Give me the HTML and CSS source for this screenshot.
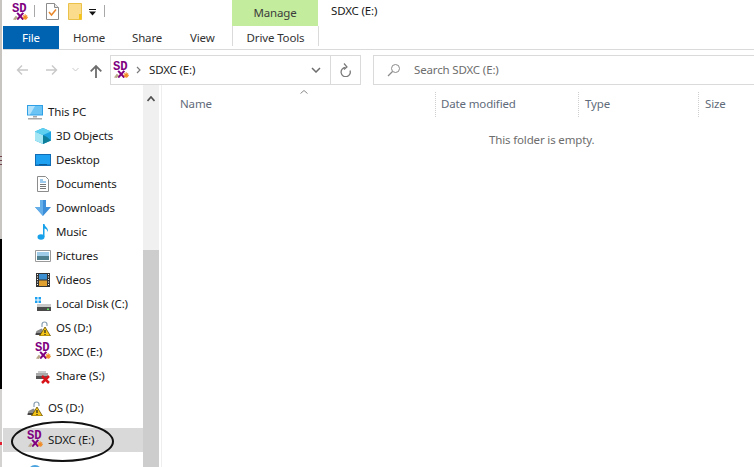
FILE: index.html
```html
<!DOCTYPE html>
<html lang="en">
<head>
<meta charset="utf-8">
<title>SDXC (E:)</title>
<link rel="stylesheet" href="styles.css">
</head>
<body>
<svg class="defs" width="0" height="0" aria-hidden="true">
  <defs>
    <symbol id="i-sd" viewBox="0 0 17 18">
      <text x="0" y="9" class="sd-text">SD</text>
      <path d="M5.500 10.500l6.500 7M12 10.500l-6.500 7" stroke="#800080" stroke-width="2.200" fill="none"/>
      <path d="M1 17.500l3-4 2.500 2-2.500 2.500z" fill="#b9a98a"/>
      <path d="M14 12v6M11 15h6M12 13l4 4M16 13l-4 4" stroke="#f08a24" stroke-width="1.100" fill="none"/>
    </symbol>
    <symbol id="i-os" viewBox="0 0 16 16">
      <path d="M7 7V4.500a2.500 2.500 0 0 1 5 0V6" fill="none" stroke="#8aa0b4" stroke-width="1.200"/>
      <path d="M0 15l1.500-4 5-2.500 1 1V15z" fill="#8b8b8b"/>
      <path d="M1 15v-2h5v2z" fill="#444"/>
      <path d="M10 7l5.500 9h-11z" fill="#f5c518" stroke="#6b5200" stroke-width=".8"/>
      <path d="M10 10v3M10 14v1" stroke="#222" stroke-width="1.200"/>
    </symbol>
  </defs>
</svg>
<div class="app">
  <div class="edge">
    <div class="edge-top">
      <span class="edge-mark"></span><span class="edge-mark"></span><span class="edge-mark"></span>
    </div>
    <div class="edge-black"></div>
    <div class="edge-low"><span class="edge-red"></span></div>
  </div>
  <div class="window">
    <header class="title-row">
      <svg class="ic-qat-sd"><use href="#i-sd"/></svg>
      <span class="qat-sep"></span>
      <svg class="ic-prop" viewBox="0 0 13 17">
        <path d="M.5.500h8l4 4v12H.5z" fill="#fff" stroke="#8c8c8c"/>
        <path d="M8.500.500v4h4" fill="#e8e8e8" stroke="#8c8c8c"/>
        <path d="M3 9l2.500 3L10 6.500" fill="none" stroke="#e8862a" stroke-width="1.500"/>
      </svg>
      <svg class="ic-folder" viewBox="0 0 14 17">
        <path d="M.5.500h13v16H.5z" fill="#fbdc8c" stroke="#eac24a"/>
        <path d="M11 11h2.500v5.500H11z" fill="#f5c518"/>
      </svg>
      <svg class="ic-drop" viewBox="0 0 7 7">
        <path d="M0 .500h7" stroke="#111" stroke-width="1"/>
        <path d="M0 2.500h7L3.500 6.500z" fill="#111"/>
      </svg>
      <span class="qat-sep qat-sep-last"></span>
      <div class="manage">Manage</div>
      <div class="window-title">SDXC (E:)</div>
    </header>
    <nav class="tab-row">
      <div class="tab-file">File</div>
      <div class="tab tab-home">Home</div>
      <div class="tab tab-share">Share</div>
      <div class="tab tab-view">View</div>
      <div class="tab-drive">Drive Tools</div>
    </nav>
    <div class="nav-row">
      <svg class="nav-arrow" viewBox="0 0 12 12"><path d="M12 6H1.500M6 1.500L1.500 6 6 10.500" fill="none" stroke="#c8c8c8" stroke-width="1.400"/></svg>
      <svg class="nav-arrow nav-forward" viewBox="0 0 12 12"><path d="M0 6h10.500M6 1.500L10.500 6 6 10.500" fill="none" stroke="#c8c8c8" stroke-width="1.400"/></svg>
      <svg class="nav-recent" viewBox="0 0 7 5"><path d="M.5 1L3.500 4l3-3" fill="none" stroke="#c8c8c8" stroke-width="1"/></svg>
      <svg class="nav-up" viewBox="0 0 12 14"><path d="M6 14V2M.7 7.300L6 2l5.300 5.300" fill="none" stroke="#6d6d6d" stroke-width="1.800"/></svg>
      <div class="address">
        <svg class="ic-addr-sd"><use href="#i-sd"/></svg>
        <svg class="crumb" viewBox="0 0 5 8"><path d="M1 1l3 3-3 3" fill="none" stroke="#7a7a7a" stroke-width="1.200"/></svg>
        <span class="address-text">SDXC (E:)</span>
        <svg class="addr-drop" viewBox="0 0 10 6"><path d="M1 1l4 4 4-4" fill="none" stroke="#6d6d6d" stroke-width="1.500"/></svg>
        <span class="refresh">
          <svg viewBox="0 0 12 14" width="12" height="14"><path d="M5.500 2.500A4.600 4.600 0 1 0 10 5.500" fill="none" stroke="#7a7a7a" stroke-width="1.300" transform="translate(0 2)"/><path d="M4 .5l3 3.500-3 2.500" fill="none" stroke="#7a7a7a" stroke-width="1.200"/></svg>
        </span>
      </div>
      <div class="search">
        <svg class="ic-search" viewBox="0 0 14 14"><circle cx="8.500" cy="5.500" r="4" fill="none" stroke="#8a8a8a" stroke-width="1"/><path d="M5.500 8.500L1 13" stroke="#8a8a8a" stroke-width="1.200"/></svg>
        <span>Search SDXC (E:)</span>
      </div>
    </div>
    <div class="body-row">
      <aside class="tree">
        <div class="row">
          <svg class="ic" viewBox="0 0 16 16"><path d="M0 1h16v10.500H0z" fill="#2f9fe6"/><path d="M1 2h14v8.500H1z" fill="#6cc4f5"/><path d="M1 2h7L3 10.500H1z" fill="#b4e2fb"/><path d="M6 12h4v1.500H6zM1 14h14v1.500H1z" fill="#a8a8a8"/></svg>
          <span>This PC</span>
        </div>
        <div class="row row-child">
          <svg class="ic" viewBox="0 0 16 16"><path d="M8 0l8 3.500v9L8 16l-8-3.500v-9z" fill="#1fa3e0"/><path d="M0 3.500L8 7v9l-8-3.500z" fill="#a4e6f4"/><path d="M8 7v9l8-3.500L12 9z" fill="#0d7f9a"/><path d="M8 0l8 3.500L8 7 0 3.500z" fill="#5fd0f0"/></svg>
          <span>3D Objects</span>
        </div>
        <div class="row row-child">
          <svg class="ic" viewBox="0 0 16 16"><path d="M0 2h16v12H0z" fill="#0f6cb5"/><path d="M1 3h14v9.500H1z" fill="#1ea1f1"/><path d="M4 12h8v1H4z" fill="#0c5a96"/></svg>
          <span>Desktop</span>
        </div>
        <div class="row row-child">
          <svg class="ic" viewBox="0 0 16 16"><path d="M2.500.500h8l3 3v12h-11z" fill="#fff" stroke="#8c8c8c"/><path d="M5 4h3M5 6h6" stroke="#3a96dd"/><path d="M5 8.500h6M5 10.500h6M5 12.500h6" stroke="#777"/></svg>
          <span>Documents</span>
        </div>
        <div class="row row-child">
          <svg class="ic" viewBox="0 0 16 16"><path d="M5 0h6v7h5l-8 9-8-9h5z" fill="#3d8fd9"/><path d="M5 0h3v16L0 7h5z" fill="#64aeea"/></svg>
          <span>Downloads</span>
        </div>
        <div class="row row-child">
          <svg class="ic" viewBox="0 0 16 16"><ellipse cx="6" cy="13" rx="3.500" ry="2.800" fill="#17a1ea"/><path d="M8 13V0h1.500c.3 3 4 3.500 3.500 8-1-2.500-2.500-3.500-3.500-3.500V13z" fill="#17a1ea"/></svg>
          <span>Music</span>
        </div>
        <div class="row row-child">
          <svg class="ic" viewBox="0 0 16 16"><path d="M.5 2.500h15v11H.5z" fill="#fff" stroke="#9a9a9a"/><path d="M2 4h12v4H2z" fill="#9ecbe8"/><path d="M2 8h12v4H2z" fill="#4d7f8f"/></svg>
          <span>Pictures</span>
        </div>
        <div class="row row-child">
          <svg class="ic" viewBox="0 0 16 16"><path d="M1 1h14v14H1z" fill="#333"/><path d="M4 2h8v5.500H4z" fill="#3c8fd0"/><path d="M4 8.500h8V14H4z" fill="#e0a030"/><path d="M2 2.500h1M2 5h1M2 7.500h1M2 10h1M2 12.500h1M13 2.500h1M13 5h1M13 7.500h1M13 10h1M13 12.500h1" stroke="#fff" stroke-width="1"/></svg>
          <span>Videos</span>
        </div>
        <div class="row row-child">
          <svg class="ic" viewBox="0 0 16 16"><path d="M0 1h2.500v2.500H0zM3.500 1H6v2.500H3.500zM0 4.500h2.500V7H0zM3.500 4.500H6V7H3.500z" fill="#1ea1f1"/><path d="M2 8h14v7H2z" fill="#c9c9c9"/><path d="M2 11h14v4H2z" fill="#4a4a4a"/><path d="M12 12.500h2v1.500h-2z" fill="#5fe05f"/></svg>
          <span>Local Disk (C:)</span>
        </div>
        <div class="row row-child">
          <svg class="ic"><use href="#i-os"/></svg>
          <span>OS (D:)</span>
        </div>
        <div class="row row-child">
          <svg class="ic ic-sd"><use href="#i-sd"/></svg>
          <span>SDXC (E:)</span>
        </div>
        <div class="row row-child">
          <svg class="ic" viewBox="0 0 16 16"><path d="M1 5h12v6H1z" fill="#a9a9a9"/><path d="M1 8h12v3H1z" fill="#555"/><path d="M3 3h8v2H3z" fill="#ccc"/><path d="M7 8l7 7M14 8l-7 7" stroke="#d8141a" stroke-width="2.500"/></svg>
          <span>Share (S:)</span>
        </div>
        <div class="row row-gap">
          <svg class="ic"><use href="#i-os"/></svg>
          <span>OS (D:)</span>
        </div>
        <div class="row row-gap row-selected">
          <svg class="ic ic-sd"><use href="#i-sd"/></svg>
          <span>SDXC (E:)</span>
        </div>
        <div class="row row-gap">
          <svg class="ic ic-net" viewBox="0 0 16 16"><circle cx="8" cy="8" r="7" fill="#4aa3df"/><path d="M2 8h12" stroke="#d8eefb"/></svg>
        </div>
      </aside>
      <div class="scrollbar">
        <div class="scroll-track">
          <svg class="scroll-up" viewBox="0 0 8 6"><path d="M.500 5L4 1l3.500 4" fill="none" stroke="#505050" stroke-width="1.700"/></svg>
        </div>
        <div class="scroll-thumb"></div>
      </div>
      <main class="files">
        <div class="col-head">
          <div class="col col-name">Name<svg class="sort" viewBox="0 0 8 4"><path d="M.5 3.500L4 .5l3.500 3" fill="none" stroke="#8a8a8a"/></svg></div>
          <div class="col col-date">Date modified</div>
          <div class="col col-type">Type</div>
          <div class="col col-size">Size</div>
        </div>
        <p class="empty">This folder is empty.</p>
      </main>
    </div>
  </div>
  <div class="ellipse"></div>
</div>
</body>
</html>
```
FILE: styles.css
```css
* { box-sizing: border-box; }
html, body { margin: 0; padding: 0; background: #fff; }
body { width: 754px; height: 467px; overflow: hidden; font-family: "Noto Sans", "Open Sans", sans-serif; font-size: 11.5px; letter-spacing: -0.15px; color: #1a1a1a; }
.defs { display: block; height: 0; }
.sd-text { font-family: "Liberation Mono", monospace; font-weight: 700; font-size: 13px; letter-spacing: 0; fill: #800080; }
.app { position: relative; width: 754px; height: 467px; display: flex; overflow: hidden; }
.edge { width: 3px; flex: none; display: flex; flex-direction: column; padding-right: 1px; }
.edge-top { height: 239px; background: #c8c4c0; display: flex; flex-direction: column; gap: 3px; padding-top: 156px; }
.edge-mark { height: 1px; background: #70404c; }
.edge-black { height: 150px; background: #000; }
.edge-low { flex: 1; background: #d4d2d0; padding-top: 53px; }
.edge-red { display: block; height: 3px; background: #e02030; }
.window { width: 751px; flex: none; display: flex; flex-direction: column; }

.title-row { height: 26px; display: flex; align-items: flex-start; }
.ic-qat-sd { width: 16px; height: 17px; margin: 3px 0 0 9px; flex: none; }
.qat-sep { width: 1px; height: 12px; margin: 5px 0 0 6px; background: #a8a8a8; flex: none; }
.ic-prop { width: 13px; height: 17px; margin: 3px 0 0 11px; flex: none; }
.ic-folder { width: 14px; height: 17px; margin: 3px 0 0 9px; flex: none; }
.ic-drop { width: 7px; height: 7px; margin: 9px 0 0 7px; flex: none; }
.qat-sep-last { margin-left: 8px; }
.manage { width: 86px; height: 26px; margin-left: 127px; background: #c3ec9c; text-align: center; line-height: 26px; color: #3c3c3c; flex: none; }
.window-title { margin-left: 13px; line-height: 22px; color: #1a1a1a; }

.tab-row { height: 24px; display: flex; border-bottom: 1px solid #dadada; align-items: flex-start; }
.tab-file { width: 56px; height: 23px; background: #0063b1; color: #fff; text-align: center; line-height: 23px; flex: none; }
.tab { line-height: 23px; color: #333; flex: none; }
.tab-home { width: 59px; margin-left: 14px; }
.tab-share { width: 58px; }
.tab-view { width: 42px; }
.tab-drive { width: 87px; height: 20px; border: solid #dadada; border-width: 0 1px; text-align: center; line-height: 23px; color: #333; flex: none; }

.nav-row { height: 35px; display: flex; align-items: flex-start; }
.nav-arrow { width: 12px; height: 12px; margin: 14px 0 0 13px; flex: none; }
.nav-forward { margin-left: 18px; }
.nav-recent { width: 7px; height: 5px; margin: 17px 0 0 14px; flex: none; }
.nav-up { width: 12px; height: 14px; margin: 14px 0 0 11px; flex: none; }
.address { width: 251px; height: 30px; margin: 5px 0 0 8px; border: 1px solid #dadada; display: flex; align-items: center; flex: none; }
.ic-addr-sd { width: 16px; height: 17px; margin: -2px 0 0 2px; flex: none; }
.crumb { width: 5px; height: 8px; margin-left: 7px; flex: none; }
.address-text { margin: -2px 0 0 8px; flex: 1; color: #222; }
.addr-drop { width: 10px; height: 6px; margin-right: 9px; flex: none; }
.refresh { width: 30px; height: 28px; border-left: 1px solid #dadada; display: flex; align-items: center; justify-content: center; flex: none; }
.search { flex: 1; height: 30px; margin: 5px 0 0 12px; border: solid #dadada; border-width: 1px 0 1px 1px; display: flex; align-items: center; color: #6d6d6d; }
.ic-search { width: 14px; height: 14px; margin-left: 13px; flex: none; }
.search span { margin: -2px 0 0 13px; }

.body-row { flex: 1; display: flex; min-height: 0; }
.tree { width: 140px; padding-top: 15px; flex: none; overflow: hidden; }
.row { height: 24px; display: flex; align-items: center; padding-left: 24px; gap: 5px; color: #1a1a1a; }
.row span { margin-top: -2px; }
.row-child { padding-left: 32px; }
.row-gap { margin-top: 8px; }
.row-selected { background: #d9d9d9; }
.ic { width: 16px; height: 16px; flex: none; }
.ic-sd { height: 17px; margin-top: -3px; }
.scrollbar { width: 16px; flex: none; display: flex; flex-direction: column; }
.scroll-track { height: 165px; background: #f0f0f0; text-align: center; padding-top: 11px; }
.scroll-up { display: block; width: 8px; height: 6px; margin: 0 auto; }
.scroll-thumb { flex: 1; background: #cdcdcd; }
.files { flex: 1; margin-left: 2px; border-left: 1px solid #eeeeee; }
.col-head { height: 25px; margin-top: 7px; display: flex; }
.col { height: 25px; line-height: 23px; color: #5f6b7a; padding-left: 5px; flex: none; }
.col-name { position: relative; width: 273px; padding-left: 18px; }
.sort { position: absolute; left: 138px; top: -2px; width: 8px; height: 4px; }
.col-date { width: 143px; border-left: 1px dotted #cfcfcf; }
.col-type { width: 120px; padding-left: 6px; border-left: 1px dotted #cfcfcf; }
.col-size { flex: 1; padding-left: 6px; border-left: 1px dotted #cfcfcf; }
.empty { margin: 14px 0 0; width: 592px; padding-left: 327px; line-height: 18px; color: #6d6d6d; white-space: nowrap; }

.ellipse { position: absolute; left: 11px; top: 421px; width: 103px; height: 41px; border: 2px solid #111; border-radius: 50%; pointer-events: none; }
```
